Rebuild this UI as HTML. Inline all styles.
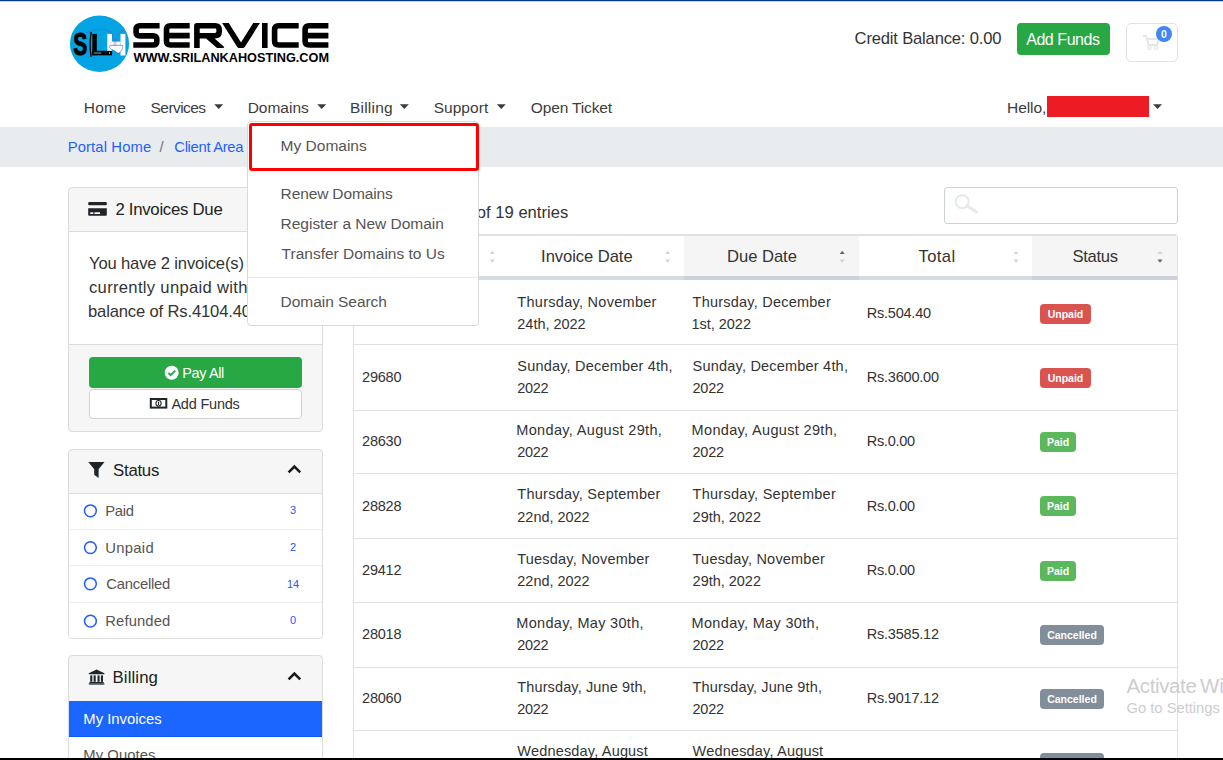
<!DOCTYPE html>
<html><head><meta charset="utf-8">
<style>
html,body{margin:0;padding:0;}
body{width:1223px;height:760px;overflow:hidden;position:relative;background:#fff;font-family:"Liberation Sans",sans-serif;}
.a{position:absolute;box-sizing:border-box;}
.t{position:absolute;white-space:nowrap;z-index:5;}
.dd{z-index:10;}
</style></head><body>
<!-- top line -->
<div class="a" style="left:0;top:0;width:1223px;height:1px;background:#07348c"></div>
<div class="a" style="left:0;top:1px;width:1223px;height:1px;background:#c5cde3"></div>

<!-- logo -->
<svg class="a" style="left:0;top:0" width="340" height="80" viewBox="0 0 340 80">
  <ellipse cx="99.5" cy="43.7" rx="29.6" ry="28.2" fill="#04a3e3"/>
  <text x="73.3" y="55.2" font-family="Liberation Sans" font-weight="700" font-size="30.5" fill="#000" stroke="#000" stroke-width="1.1" textLength="14" lengthAdjust="spacingAndGlyphs">S</text>
  <path d="M91.1,32 Q89.2,44.5 91.1,57" fill="none" stroke="#000" stroke-width="1.3"/>
  <rect x="92.3" y="33.9" width="4.5" height="21.3" fill="#000"/>
  <rect x="92.3" y="50.8" width="19.8" height="4.5" fill="#000"/>
  <rect x="93.8" y="52.3" width="7.5" height="1.5" fill="#5a8fc8" opacity="0.8"/>
  <circle cx="109.6" cy="53" r="0.7" fill="#cfe"/>
  <rect x="107.3" y="33.9" width="4.7" height="16.9" fill="#fff"/>
  <rect x="120.5" y="33.9" width="4.9" height="21.6" fill="#fff"/>
  <rect x="112" y="41.6" width="8.5" height="3.6" fill="#fff"/>
  <path d="M110,45.3 H122.5 Q123.3,47.5 122,49.5 Q121,52 118.5,53.3 Q116,52.2 114,50.5 Q110.5,49.5 109.6,47.5 Z" fill="#fff" stroke="#2a4fb0" stroke-width="0.5"/>
  <path d="M86,33 Q100,26 111,32 Q114.5,36 114.3,45.3 M115.6,45.3 Q116,32 124.5,29.5" fill="none" stroke="#6a52b0" stroke-width="0.45"/>
  <defs><clipPath id="svc"><rect x="125" y="22.9" width="210" height="25.1"/></clipPath></defs>
  <g fill="none" stroke="#000" stroke-width="5.6" stroke-linejoin="round" clip-path="url(#svc)">
    <!-- S -->
    <path d="M159.6,25.8 H140 Q136.1,25.8 136.1,29.5 V32.2 Q136.1,35.9 140,35.9 H153 Q156.8,35.9 156.8,39.6 V41.4 Q156.8,45 153,45 H133.3"/>
    <!-- E -->
    <path d="M189.7,25.8 H170.5 Q166.5,25.8 166.5,29.8 V41 Q166.5,45 170.5,45 H189.7 M166.5,35.6 H189.7"/>
    <!-- R -->
    <path d="M196.9,48 V25.8 H215 Q219.2,25.8 219.2,30 V31.5 Q219.2,35.7 215,35.7 H197 M207,35.7 L222.5,49"/>
    <!-- V -->
    <path d="M224.5,21.5 L239.3,45 Q241,47 242.7,45 L257.5,21.5"/>
    <!-- I -->
    <path d="M264.8,23 V48"/>
    <!-- C -->
    <path d="M298.7,25.8 H278.5 Q274.6,25.8 274.6,29.8 V41 Q274.6,45 278.5,45 H298.7"/>
    <!-- E -->
    <path d="M328.4,25.8 H309 Q305.1,25.8 305.1,29.8 V41 Q305.1,45 309,45 H328.4 M305.1,35.6 H328.4"/>
  </g>
  <text x="133.5" y="62.2" font-family="Liberation Sans" font-weight="700" font-size="12.6" fill="#000" textLength="195.5" lengthAdjust="spacingAndGlyphs">WWW.SRILANKAHOSTING.COM</text>
</svg>

<!-- header buttons -->
<div class="a" style="left:1017px;top:23px;width:93px;height:32px;background:#28a745;border-radius:4px"></div>
<div class="a" style="left:1126px;top:23px;width:52px;height:39px;border:1px solid #e3e3e3;border-radius:5px"></div>
<svg class="a" style="left:1140px;top:33px" width="22" height="18" viewBox="0 0 22 18">
  <path d="M3,3 H6 L8.5,12 H17 L18.5,6 H7" fill="none" stroke="#e6e6e6" stroke-width="2"/>
  <circle cx="9.5" cy="15" r="1.7" fill="none" stroke="#e6e6e6" stroke-width="1.3"/>
  <circle cx="16" cy="15" r="1.7" fill="none" stroke="#e6e6e6" stroke-width="1.3"/>
</svg>
<div class="a" style="left:1156px;top:26px;width:16px;height:16px;border-radius:50%;background:#4285f4;color:#fff;font-size:10.5px;font-weight:700;text-align:center;line-height:17.5px">0</div>

<!-- nav carets -->
<svg class="a" style="left:0;top:100px" width="1223" height="12" viewBox="0 100 1223 12">
  <g fill="#3c3c3c">
    <path d="M214.2,104.3 H223.2 L218.7,109 Z"/>
    <path d="M317.2,104.3 H326.2 L321.7,109 Z"/>
    <path d="M399.8,104.3 H408.8 L404.3,109 Z"/>
    <path d="M496.8,104.3 H505.8 L501.3,109 Z"/>
    <path d="M1153,104.3 H1162 L1157.5,109 Z"/>
  </g>
</svg>
<div class="a" style="left:1047px;top:96px;width:102px;height:21px;background:#ed1c24"></div>

<!-- breadcrumb -->
<div class="a" style="left:0;top:127px;width:1223px;height:40px;background:#e9ecef"></div>

<!-- sidebar card 1 -->
<div class="a" style="left:68px;top:187px;width:255px;height:245px;border:1px solid #dcdcdc;border-radius:4px;background:#f6f6f6;overflow:hidden">
  <div class="a" style="left:0;top:43px;width:253px;height:113.5px;background:#fff;border-top:1px solid #dcdcdc;border-bottom:1px solid #dcdcdc"></div>
</div>
<svg class="a" style="left:86px;top:200px" width="22" height="18" viewBox="0 0 22 18">
  <rect x="2.2" y="2" width="18.6" height="3.2" rx="1" fill="#212529"/>
  <path d="M2.2,8.2 H20.8 V14.8 Q20.8,15.8 19.8,15.8 H3.2 Q2.2,15.8 2.2,14.8 Z" fill="#212529"/>
  <rect x="4.3" y="12.3" width="3" height="1.7" fill="#fff"/>
  <rect x="8.5" y="12.3" width="5.5" height="1.7" fill="#fff"/>
</svg>
<div class="a" style="left:89px;top:357px;width:213px;height:31px;background:#28a745;border-radius:4px"></div>
<div class="a" style="left:89px;top:388.5px;width:213px;height:30px;background:#fff;border:1px solid #cfd3d8;border-radius:4px"></div>
<svg class="a" style="left:163px;top:364px" width="18" height="17" viewBox="0 0 18 17">
  <circle cx="8.7" cy="8.7" r="7" fill="#fff"/>
  <path d="M5.3,8.8 L7.7,11.2 L12.2,6.6" fill="none" stroke="#28a745" stroke-width="1.9"/>
</svg>
<svg class="a" style="left:148px;top:396px" width="22" height="15" viewBox="0 0 22 15">
  <rect x="2.8" y="3" width="15.5" height="8.6" fill="none" stroke="#212529" stroke-width="2"/>
  <ellipse cx="10.55" cy="7.3" rx="2.6" ry="2.8" fill="none" stroke="#212529" stroke-width="1.1"/>
  <path d="M10.55,5.8 V8.9" stroke="#212529" stroke-width="1.1"/>
</svg>

<!-- status card -->
<div class="a" style="left:68px;top:448.5px;width:255px;height:190px;border:1px solid #dcdcdc;border-radius:4px;background:#f6f6f6;overflow:hidden">
  <div class="a" style="left:0;top:43px;width:253px;height:150px;background:#fff;border-top:1px solid #dcdcdc"></div>
  <div class="a" style="left:0;top:79px;width:253px;height:1px;background:#efefef"></div>
  <div class="a" style="left:0;top:115px;width:253px;height:1px;background:#efefef"></div>
  <div class="a" style="left:0;top:152px;width:253px;height:1px;background:#efefef"></div>
</div>
<svg class="a" style="left:86px;top:459px" width="22" height="22" viewBox="0 0 22 22">
  <path d="M2.3,3 H18.5 L12.6,10.2 V19 L8.2,15.8 V10.2 Z" fill="#212529"/>
</svg>
<svg class="a" style="left:280px;top:455px" width="30" height="30" viewBox="0 0 30 30">
  <path d="M8.6,17.4 L14.4,11.6 L20.2,17.4" fill="none" stroke="#1a1a1a" stroke-width="2.6"/>
</svg>
<svg class="a" style="left:0;top:495px" width="320" height="140" viewBox="0 495 320 140">
  <g fill="none" stroke="#1f5cff" stroke-width="1.5">
    <circle cx="90.4" cy="510.8" r="5.9"/>
    <circle cx="90.4" cy="547.6" r="5.9"/>
    <circle cx="90.4" cy="583.8" r="5.9"/>
    <circle cx="90.4" cy="621.1" r="5.9"/>
  </g>
</svg>
<div class="a" style="left:272px;top:503px;width:42px;height:14px;text-align:center;font-size:11px;line-height:14px;color:#2458f5">3</div>
<div class="a" style="left:272px;top:539.6px;width:42px;height:14px;text-align:center;font-size:11px;line-height:14px;color:#2458f5">2</div>
<div class="a" style="left:272px;top:576.5px;width:42px;height:14px;text-align:center;font-size:11px;line-height:14px;color:#2458f5">14</div>
<div class="a" style="left:272px;top:613.1px;width:42px;height:14px;text-align:center;font-size:11px;line-height:14px;color:#2458f5">0</div>

<!-- billing card -->
<div class="a" style="left:68px;top:655px;width:255px;height:130px;border:1px solid #dcdcdc;border-radius:4px;background:#f6f6f6;overflow:hidden">
  <div class="a" style="left:0;top:45px;width:253px;height:36px;background:#1a66ff;border-bottom:1px solid #0a58ff"></div>
  <div class="a" style="left:0;top:81px;width:253px;height:60px;background:#fff"></div>
</div>
<svg class="a" style="left:86px;top:667px" width="22" height="20" viewBox="0 0 22 20">
  <path d="M2.8,6.2 L10.6,2.6 L18.4,6.2 V7.3 H2.8 Z" fill="#212529"/>
  <rect x="4.2" y="8.4" width="2.1" height="6.4" fill="#212529"/>
  <rect x="7.6" y="8.4" width="2.1" height="6.4" fill="#212529"/>
  <rect x="11.5" y="8.4" width="2.1" height="6.4" fill="#212529"/>
  <rect x="14.9" y="8.4" width="2.1" height="6.4" fill="#212529"/>
  <rect x="3.5" y="15" width="14.2" height="1.3" fill="#212529"/>
  <rect x="2.8" y="16.4" width="15.6" height="1.2" fill="#212529"/>
</svg>
<svg class="a" style="left:280px;top:662px" width="30" height="30" viewBox="0 0 30 30">
  <path d="M8.6,17.4 L14.4,11.6 L20.2,17.4" fill="none" stroke="#1a1a1a" stroke-width="2.6"/>
</svg>

<!-- search box -->
<div class="a" style="left:944px;top:187px;width:234px;height:37px;border:1px solid #ccd1d9;border-radius:3px"></div>
<svg class="a" style="left:950px;top:190px" width="32" height="30" viewBox="0 0 32 30">
  <circle cx="12.2" cy="11.7" r="6.5" fill="none" stroke="#e6e8ea" stroke-width="2"/>
  <path d="M17,15.7 L26.5,22" stroke="#e6e8ea" stroke-width="2.8" stroke-linecap="round"/>
</svg>

<!-- table -->
<div class="a" style="left:353px;top:234px;width:825px;height:540px;border:1px solid #dee2e6;border-top:2px solid #dee2e6;border-radius:4px 4px 0 0"></div>
<div class="a" style="left:684px;top:236px;width:175px;height:40px;background:#f5f5f5"></div>
<div class="a" style="left:1032px;top:236px;width:145px;height:40px;background:#f5f5f5"></div>
<div class="a" style="left:354px;top:276px;width:823px;height:4px;background:#d6dbe2"></div>
<div class="a" style="left:684px;top:276px;width:175px;height:4px;background:#ccd1d9"></div>
<div class="a" style="left:1032px;top:276px;width:145px;height:4px;background:#ccd1d9"></div>
<div class="a" style="left:1040px;top:303.9px;width:51px;height:20px;background:#d9534f;border-radius:4px;color:#fff;font-weight:700;font-size:10.5px;line-height:20px;text-align:center">Unpaid</div>
<div class="a" style="left:354px;top:344.4px;width:823px;height:1px;background:#dee2e6"></div>
<div class="a" style="left:1040px;top:368.0px;width:51px;height:20px;background:#d9534f;border-radius:4px;color:#fff;font-weight:700;font-size:10.5px;line-height:20px;text-align:center">Unpaid</div>
<div class="a" style="left:354px;top:409.5px;width:823px;height:1px;background:#dee2e6"></div>
<div class="a" style="left:1040px;top:432.2px;width:36px;height:20px;background:#5cb85c;border-radius:4px;color:#fff;font-weight:700;font-size:10.5px;line-height:20px;text-align:center">Paid</div>
<div class="a" style="left:354px;top:473.3px;width:823px;height:1px;background:#dee2e6"></div>
<div class="a" style="left:1040px;top:496.4px;width:36px;height:20px;background:#5cb85c;border-radius:4px;color:#fff;font-weight:700;font-size:10.5px;line-height:20px;text-align:center">Paid</div>
<div class="a" style="left:354px;top:537.7px;width:823px;height:1px;background:#dee2e6"></div>
<div class="a" style="left:1040px;top:560.5px;width:36px;height:20px;background:#5cb85c;border-radius:4px;color:#fff;font-weight:700;font-size:10.5px;line-height:20px;text-align:center">Paid</div>
<div class="a" style="left:354px;top:602.2px;width:823px;height:1px;background:#dee2e6"></div>
<div class="a" style="left:1040px;top:624.6px;width:64px;height:20px;background:#838e9b;border-radius:4px;color:#fff;font-weight:700;font-size:10.5px;line-height:20px;text-align:center">Cancelled</div>
<div class="a" style="left:354px;top:666.6px;width:823px;height:1px;background:#dee2e6"></div>
<div class="a" style="left:1040px;top:688.8px;width:64px;height:20px;background:#838e9b;border-radius:4px;color:#fff;font-weight:700;font-size:10.5px;line-height:20px;text-align:center">Cancelled</div>
<div class="a" style="left:354px;top:730.4px;width:823px;height:1px;background:#dee2e6"></div>
<div class="a" style="left:1040px;top:753.0px;width:64px;height:20px;background:#838e9b;border-radius:4px;color:#fff;font-weight:700;font-size:10.5px;line-height:20px;text-align:center">Cancelled</div>

<!-- sort arrows -->
<svg class="a" style="left:0;top:245px" width="1223" height="22" viewBox="0 245 1223 22">
  <g fill="#d3d3d3">
    <path d="M489.8,254 H494.8 L492.3,250.8 Z"/><path d="M489.8,259.6 H494.8 L492.3,262.8 Z"/>
    <path d="M665.1,254 H670.1 L667.6,250.8 Z"/><path d="M665.1,259.6 H670.1 L667.6,262.8 Z"/>
    <path d="M839.7,259.6 H844.7 L842.2,262.8 Z"/>
    <path d="M1013.5,254 H1018.5 L1016,250.8 Z"/><path d="M1013.5,259.6 H1018.5 L1016,262.8 Z"/>
    <path d="M1157.5,254 H1162.5 L1160,250.8 Z"/>
  </g>
  <g fill="#666">
    <path d="M839.7,254 H844.7 L842.2,250.8 Z"/>
    <path d="M1157.5,259.6 H1162.5 L1160,262.8 Z"/>
  </g>
</svg>

<!-- dropdown -->
<div class="a dd" style="left:247px;top:121px;width:232px;height:205px;background:#fff;border:1px solid #d9d9d9;border-radius:4px"></div>
<div class="a dd" style="left:248px;top:277px;width:230px;height:1px;background:#e9ecef"></div>
<div class="a dd" style="left:249px;top:123px;width:230px;height:48px;border:3px solid #ff0000;border-radius:3px"></div>

<!-- bottom bar -->
<div class="a" style="left:0;top:758px;width:1223px;height:2px;background:#000;z-index:20"></div>

<div class="t" style="left:854.60px;top:28.05px;font-size:16.6px;line-height:22px;color:#333;letter-spacing:-0.186px;">Credit Balance: 0.00</div>
<div class="t" style="left:1026.20px;top:29.46px;font-size:16.0px;line-height:21px;color:#fff;letter-spacing:-0.448px;">Add Funds</div>
<div class="t" style="left:83.70px;top:98.23px;font-size:15.5px;line-height:20px;color:#3c3c3c;letter-spacing:0.258px;">Home</div>
<div class="t" style="left:150.60px;top:98.23px;font-size:15.5px;line-height:20px;color:#3c3c3c;letter-spacing:-0.583px;">Services</div>
<div class="t" style="left:247.70px;top:98.23px;font-size:15.5px;line-height:20px;color:#3c3c3c;letter-spacing:-0.018px;">Domains</div>
<div class="t" style="left:350.00px;top:98.23px;font-size:15.5px;line-height:20px;color:#3c3c3c;letter-spacing:0.211px;">Billing</div>
<div class="t" style="left:433.70px;top:98.23px;font-size:15.5px;line-height:20px;color:#3c3c3c;letter-spacing:0.036px;">Support</div>
<div class="t" style="left:530.80px;top:98.23px;font-size:15.5px;line-height:20px;color:#3c3c3c;letter-spacing:-0.148px;">Open Ticket</div>
<div class="t" style="left:1007.00px;top:98.23px;font-size:15.5px;line-height:20px;color:#3c3c3c;letter-spacing:-0.064px;">Hello,</div>
<div class="t" style="left:67.70px;top:137.77px;font-size:14.8px;line-height:19px;color:#1f5fff;letter-spacing:0.129px;">Portal Home</div>
<div class="t" style="left:159.50px;top:137.77px;font-size:14.8px;line-height:19px;color:#6c757d;">/</div>
<div class="t" style="left:174.30px;top:137.77px;font-size:14.8px;line-height:19px;color:#1f5fff;letter-spacing:-0.327px;">Client Area</div>
<div class="t" style="left:115.40px;top:198.98px;font-size:16.8px;line-height:22px;color:#222;letter-spacing:-0.282px;">2 Invoices Due</div>
<div class="t" style="left:89.00px;top:253.15px;font-size:16.6px;line-height:22px;color:#333;letter-spacing:-0.156px;">You have 2 invoice(s)</div>
<div class="t" style="left:89.00px;top:277.05px;font-size:16.6px;line-height:22px;color:#333;letter-spacing:0.311px;">currently unpaid with a total</div>
<div class="t" style="left:88.00px;top:301.35px;font-size:16.6px;line-height:22px;color:#333;letter-spacing:-0.152px;">balance of Rs.4104.40</div>
<div class="t" style="left:182.20px;top:364.28px;font-size:14.5px;line-height:19px;color:#fff;letter-spacing:-0.368px;">Pay All</div>
<div class="t" style="left:171.40px;top:395.08px;font-size:14.5px;line-height:19px;color:#333;letter-spacing:-0.210px;">Add Funds</div>
<div class="t" style="left:113.10px;top:459.58px;font-size:16.8px;line-height:22px;color:#222;letter-spacing:-0.277px;">Status</div>
<div class="t" style="left:105.30px;top:501.77px;font-size:14.8px;line-height:19px;color:#555;letter-spacing:-0.329px;">Paid</div>
<div class="t" style="left:105.30px;top:538.87px;font-size:14.8px;line-height:19px;color:#555;letter-spacing:0.288px;">Unpaid</div>
<div class="t" style="left:106.30px;top:575.07px;font-size:14.8px;line-height:19px;color:#555;letter-spacing:-0.235px;">Cancelled</div>
<div class="t" style="left:105.30px;top:612.37px;font-size:14.8px;line-height:19px;color:#555;letter-spacing:0.108px;">Refunded</div>
<div class="t" style="left:112.50px;top:666.98px;font-size:16.8px;line-height:22px;color:#222;letter-spacing:0.110px;">Billing</div>
<div class="t" style="left:83.30px;top:709.97px;font-size:14.8px;line-height:19px;color:#fff;letter-spacing:0.018px;">My Invoices</div>
<div class="t" style="left:83.30px;top:746.47px;font-size:14.8px;line-height:19px;color:#555;letter-spacing:0.070px;">My Quotes</div>
<div class="t" style="left:353.26px;top:201.85px;font-size:16.6px;line-height:22px;color:#333;">Showing 1 to 10 of 19 entries</div>
<div class="t" style="left:541.10px;top:245.85px;font-size:16.6px;line-height:22px;color:#333;letter-spacing:-0.064px;">Invoice Date</div>
<div class="t" style="left:727.00px;top:245.85px;font-size:16.6px;line-height:22px;color:#333;letter-spacing:-0.025px;">Due Date</div>
<div class="t" style="left:918.60px;top:245.85px;font-size:16.6px;line-height:22px;color:#333;letter-spacing:0.359px;">Total</div>
<div class="t" style="left:1072.60px;top:245.85px;font-size:16.6px;line-height:22px;color:#333;letter-spacing:-0.329px;">Status</div>
<div class="t" style="left:280.60px;top:136.33px;font-size:15.5px;line-height:20px;color:#555;z-index:11;">My Domains</div>
<div class="t" style="left:280.60px;top:184.33px;font-size:15.5px;line-height:20px;color:#555;letter-spacing:-0.130px;z-index:11;">Renew Domains</div>
<div class="t" style="left:280.60px;top:214.03px;font-size:15.5px;line-height:20px;color:#555;letter-spacing:-0.023px;z-index:11;">Register a New Domain</div>
<div class="t" style="left:281.60px;top:244.43px;font-size:15.5px;line-height:20px;color:#555;z-index:11;">Transfer Domains to Us</div>
<div class="t" style="left:280.60px;top:292.23px;font-size:15.5px;line-height:20px;color:#555;letter-spacing:-0.042px;z-index:11;">Domain Search</div>
<div class="t" style="left:1126.50px;top:672.40px;font-size:20.5px;line-height:27px;color:#cdcdcd;letter-spacing:-0.374px;">Activate</div>
<div class="t" style="left:1200.00px;top:672.40px;font-size:20.5px;line-height:27px;color:#cdcdcd;">Windows</div>
<div class="t" style="left:1126.50px;top:699.47px;font-size:14.8px;line-height:19px;color:#cdcdcd;letter-spacing:-0.028px;">Go to Settings</div>
<div class="t" style="left:362.10px;top:304.18px;font-size:14.5px;line-height:19px;color:#333;letter-spacing:-0.239px;">29601</div>
<div class="t" style="left:517.30px;top:292.98px;font-size:14.5px;line-height:19px;color:#333;letter-spacing:0.284px;">Thursday, November</div>
<div class="t" style="left:517.30px;top:315.08px;font-size:14.5px;line-height:19px;color:#333;letter-spacing:-0.019px;">24th, 2022</div>
<div class="t" style="left:692.60px;top:292.98px;font-size:14.5px;line-height:19px;color:#333;letter-spacing:0.225px;">Thursday, December</div>
<div class="t" style="left:691.60px;top:315.08px;font-size:14.5px;line-height:19px;color:#333;letter-spacing:-0.037px;">1st, 2022</div>
<div class="t" style="left:866.70px;top:304.18px;font-size:14.5px;line-height:19px;color:#333;letter-spacing:-0.217px;">Rs.504.40</div>
<div class="t" style="left:362.10px;top:368.33px;font-size:14.5px;line-height:19px;color:#333;letter-spacing:-0.239px;">29680</div>
<div class="t" style="left:517.30px;top:357.13px;font-size:14.5px;line-height:19px;color:#333;letter-spacing:0.203px;">Sunday, December 4th,</div>
<div class="t" style="left:517.30px;top:379.23px;font-size:14.5px;line-height:19px;color:#333;letter-spacing:-0.298px;">2022</div>
<div class="t" style="left:692.60px;top:357.13px;font-size:14.5px;line-height:19px;color:#333;letter-spacing:0.203px;">Sunday, December 4th,</div>
<div class="t" style="left:692.60px;top:379.23px;font-size:14.5px;line-height:19px;color:#333;letter-spacing:-0.298px;">2022</div>
<div class="t" style="left:866.70px;top:368.33px;font-size:14.5px;line-height:19px;color:#333;letter-spacing:-0.200px;">Rs.3600.00</div>
<div class="t" style="left:362.10px;top:432.48px;font-size:14.5px;line-height:19px;color:#333;letter-spacing:-0.239px;">28630</div>
<div class="t" style="left:516.30px;top:421.28px;font-size:14.5px;line-height:19px;color:#333;letter-spacing:0.334px;">Monday, August 29th,</div>
<div class="t" style="left:517.30px;top:443.38px;font-size:14.5px;line-height:19px;color:#333;letter-spacing:-0.298px;">2022</div>
<div class="t" style="left:691.60px;top:421.28px;font-size:14.5px;line-height:19px;color:#333;letter-spacing:0.334px;">Monday, August 29th,</div>
<div class="t" style="left:692.60px;top:443.38px;font-size:14.5px;line-height:19px;color:#333;letter-spacing:-0.298px;">2022</div>
<div class="t" style="left:866.70px;top:432.48px;font-size:14.5px;line-height:19px;color:#333;letter-spacing:-0.268px;">Rs.0.00</div>
<div class="t" style="left:362.10px;top:496.63px;font-size:14.5px;line-height:19px;color:#333;letter-spacing:-0.239px;">28828</div>
<div class="t" style="left:517.30px;top:485.43px;font-size:14.5px;line-height:19px;color:#333;letter-spacing:0.265px;">Thursday, September</div>
<div class="t" style="left:517.30px;top:507.53px;font-size:14.5px;line-height:19px;color:#333;letter-spacing:-0.023px;">22nd, 2022</div>
<div class="t" style="left:692.60px;top:485.43px;font-size:14.5px;line-height:19px;color:#333;letter-spacing:0.265px;">Thursday, September</div>
<div class="t" style="left:692.60px;top:507.53px;font-size:14.5px;line-height:19px;color:#333;letter-spacing:-0.019px;">29th, 2022</div>
<div class="t" style="left:866.70px;top:496.63px;font-size:14.5px;line-height:19px;color:#333;letter-spacing:-0.268px;">Rs.0.00</div>
<div class="t" style="left:362.10px;top:560.78px;font-size:14.5px;line-height:19px;color:#333;letter-spacing:-0.239px;">29412</div>
<div class="t" style="left:517.30px;top:549.58px;font-size:14.5px;line-height:19px;color:#333;letter-spacing:0.199px;">Tuesday, November</div>
<div class="t" style="left:517.30px;top:571.68px;font-size:14.5px;line-height:19px;color:#333;letter-spacing:-0.023px;">22nd, 2022</div>
<div class="t" style="left:692.60px;top:549.58px;font-size:14.5px;line-height:19px;color:#333;letter-spacing:0.199px;">Tuesday, November</div>
<div class="t" style="left:692.60px;top:571.68px;font-size:14.5px;line-height:19px;color:#333;letter-spacing:-0.019px;">29th, 2022</div>
<div class="t" style="left:866.70px;top:560.78px;font-size:14.5px;line-height:19px;color:#333;letter-spacing:-0.268px;">Rs.0.00</div>
<div class="t" style="left:362.10px;top:624.93px;font-size:14.5px;line-height:19px;color:#333;letter-spacing:-0.239px;">28018</div>
<div class="t" style="left:516.30px;top:613.73px;font-size:14.5px;line-height:19px;color:#333;letter-spacing:0.318px;">Monday, May 30th,</div>
<div class="t" style="left:517.30px;top:635.83px;font-size:14.5px;line-height:19px;color:#333;letter-spacing:-0.298px;">2022</div>
<div class="t" style="left:691.60px;top:613.73px;font-size:14.5px;line-height:19px;color:#333;letter-spacing:0.318px;">Monday, May 30th,</div>
<div class="t" style="left:692.60px;top:635.83px;font-size:14.5px;line-height:19px;color:#333;letter-spacing:-0.298px;">2022</div>
<div class="t" style="left:866.70px;top:624.93px;font-size:14.5px;line-height:19px;color:#333;letter-spacing:-0.200px;">Rs.3585.12</div>
<div class="t" style="left:362.10px;top:689.08px;font-size:14.5px;line-height:19px;color:#333;letter-spacing:-0.239px;">28060</div>
<div class="t" style="left:517.30px;top:677.88px;font-size:14.5px;line-height:19px;color:#333;letter-spacing:0.125px;">Thursday, June 9th,</div>
<div class="t" style="left:517.30px;top:699.98px;font-size:14.5px;line-height:19px;color:#333;letter-spacing:-0.298px;">2022</div>
<div class="t" style="left:692.60px;top:677.88px;font-size:14.5px;line-height:19px;color:#333;letter-spacing:0.125px;">Thursday, June 9th,</div>
<div class="t" style="left:692.60px;top:699.98px;font-size:14.5px;line-height:19px;color:#333;letter-spacing:-0.298px;">2022</div>
<div class="t" style="left:866.70px;top:689.08px;font-size:14.5px;line-height:19px;color:#333;letter-spacing:-0.200px;">Rs.9017.12</div>
<div class="t" style="left:517.30px;top:742.03px;font-size:14.5px;line-height:19px;color:#333;letter-spacing:0.181px;">Wednesday, August</div>
<div class="t" style="left:517.30px;top:764.13px;font-size:14.5px;line-height:19px;color:#333;letter-spacing:-0.151px;">31st, 2022</div>
<div class="t" style="left:692.60px;top:742.03px;font-size:14.5px;line-height:19px;color:#333;letter-spacing:0.181px;">Wednesday, August</div>
<div class="t" style="left:692.60px;top:764.13px;font-size:14.5px;line-height:19px;color:#333;letter-spacing:-0.151px;">31st, 2022</div>
</body></html>
